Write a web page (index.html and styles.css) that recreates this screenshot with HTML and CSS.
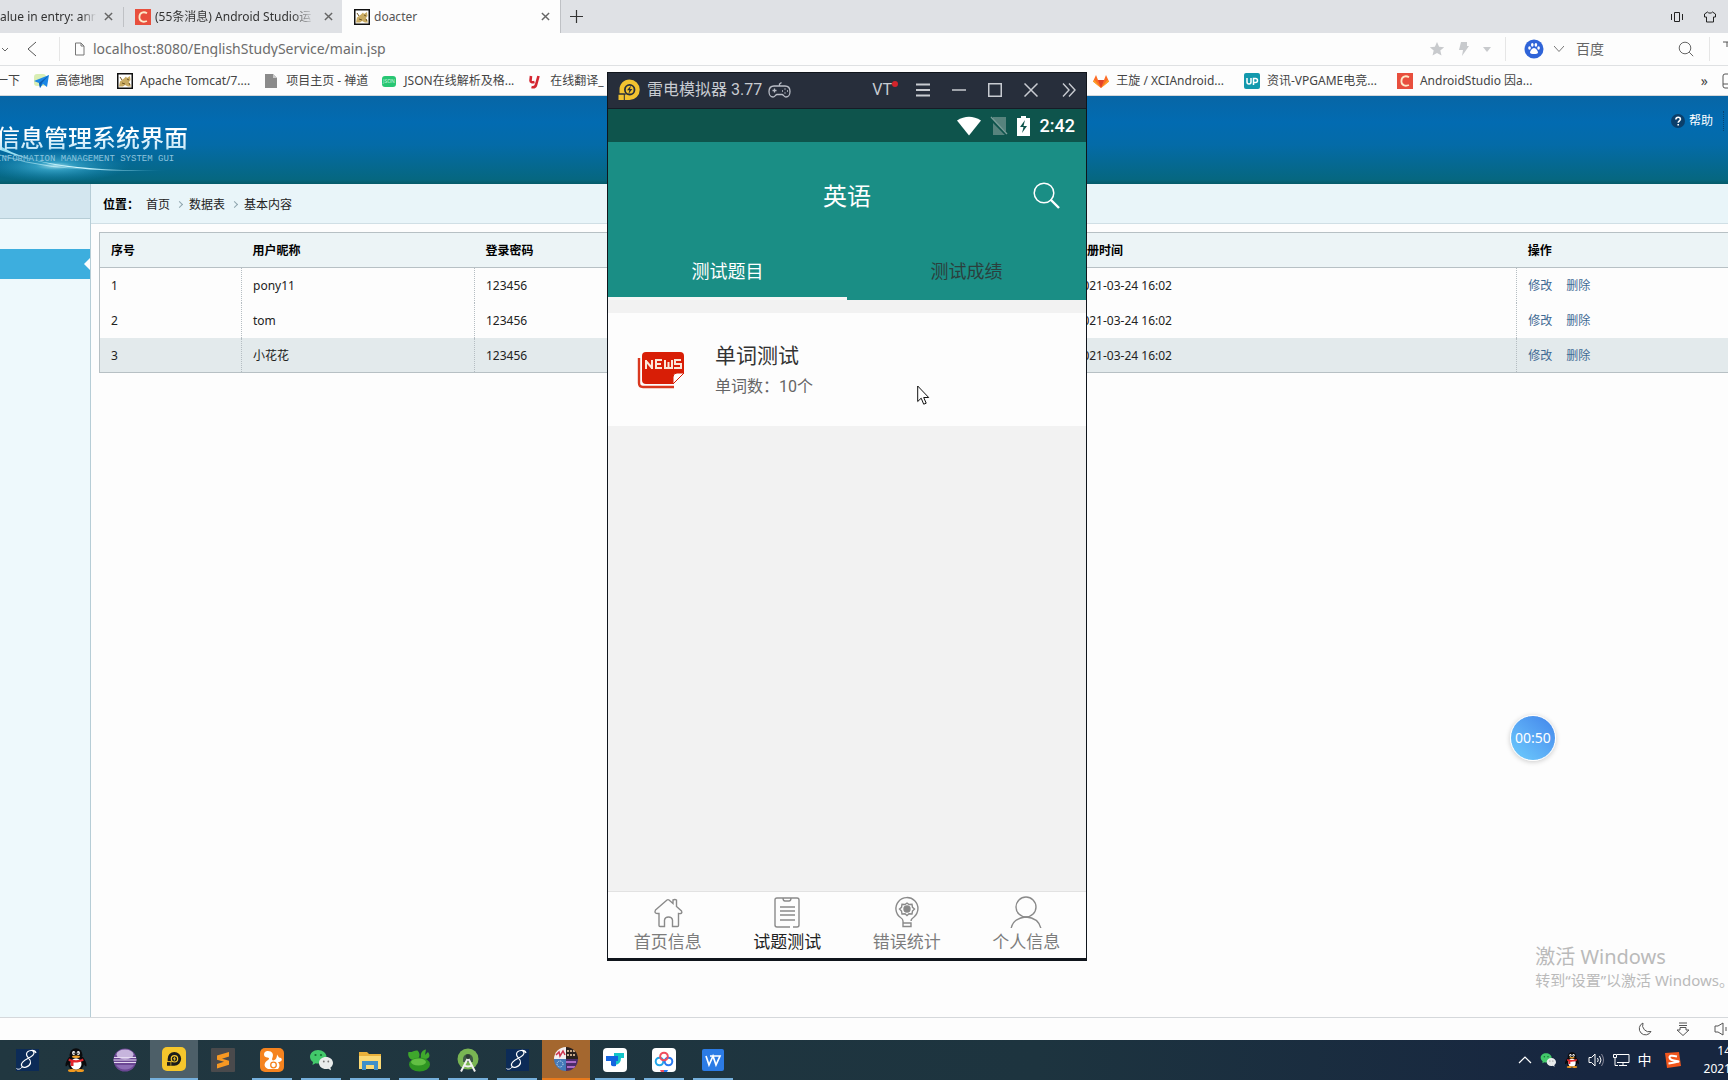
FILE: index.html
```html
<!DOCTYPE html>
<html lang="zh-CN">
<head>
    <meta charset="UTF-8">
    <meta name="viewport" content="width=device-width, initial-scale=1.0">
    <title>doacter</title>
    <link rel="stylesheet" href="styles.css">
</head>
<body>
    <!-- shared icons -->
    <svg class="sprite" aria-hidden="true">
        <symbol id="i-close" viewBox="0 0 10 10"><path d="M1 1l8 8M9 1l-8 8" stroke="currentColor" stroke-width="1.6" fill="none"/></symbol>
        <symbol id="i-csdn" viewBox="0 0 16 16"><rect width="16" height="16" fill="#e84f3d"/><path d="M12 4.2C9 2.4 4.400 3 4.400 8.200c0 4.800 4.600 5.200 7.500 3.800" fill="none" stroke="#fde9c9" stroke-width="1.8"/></symbol>
        <symbol id="i-tomcat" viewBox="0 0 16 16"><rect x=".75" y=".75" width="14.500" height="14.500" fill="#fff" stroke="#111" stroke-width="1.500"/><path d="M2 13.500l1-5 4-3 2-2 1 1.500L13 3l.5 4-1.500 2 2 4.500h-3l-3-1.500-2 1.500z" fill="#c9ab62"/><path d="M3 4l2 3M10 6l2 1M5 10l3 1M12 10l1 2" stroke="#6d5422"/></symbol>
        <symbol id="i-page" viewBox="0 0 12 14"><path d="M1.500 1h5.500L10 4v9H1.500zM7 1v3h3" fill="none" stroke="#777"/></symbol>
        <symbol id="i-search" viewBox="0 0 16 16"><circle cx="7" cy="7" r="5.800" fill="none" stroke="currentColor"/><path d="M11.200 11.200l4 4" stroke="currentColor"/></symbol>
        <symbol id="i-wechat" viewBox="0 0 24 24"><path d="M9 2C4.500 2 1 5 1 8.800c0 2.200 1.200 4.100 3 5.300L3.500 17l3-1.700c5 1.200 11-1.500 11-6.500C17.500 5 13.500 2 9 2z" fill="#42c96a"/><circle cx="6.500" cy="7" r="1.100" fill="#176c33"/><circle cx="12" cy="7" r="1.100" fill="#176c33"/><path d="M17 9c-4 0-7 2.600-7 5.900S13 21 17 21c.8 0 1.500-.1 2.200-.3l2.800 1.500-.6-2.600c1.600-1.100 2.600-2.700 2.600-4.600C24 11.600 21 9 17 9z" fill="#e9ecec"/><circle cx="14.800" cy="13.500" r=".9" fill="#777"/><circle cx="19.300" cy="13.500" r=".9" fill="#777"/></symbol>
        <symbol id="i-qq" viewBox="0 0 24 24"><path d="M5 9c-2 3-4 6-3.500 9 .4 1 2-.5 2.500-1.500h16c.5 1 2.100 2.500 2.500 1.500.5-3-1.500-6-3.500-9z" fill="#0b0b0d"/><ellipse cx="12" cy="15" rx="8" ry="8" fill="#0b0b0d"/><ellipse cx="12" cy="7" rx="6.500" ry="6.800" fill="#0b0b0d"/><ellipse cx="12" cy="16" rx="5.500" ry="5.800" fill="#fff"/><ellipse cx="9.700" cy="5" rx="1.600" ry="2.100" fill="#fff"/><ellipse cx="14.300" cy="5" rx="1.600" ry="2.100" fill="#fff"/><circle cx="10.100" cy="5.200" r=".7"/><circle cx="13.900" cy="5.200" r=".7"/><ellipse cx="12" cy="8.700" rx="4" ry="1.200" fill="#f6a52a"/><path d="M5 10.500c4 2.200 10 2.200 14 0l.6 2.300c-3 1.500-6.600 1.900-10.100 1.700V18H6.800v-4.200l-2.400-1z" fill="#e3262c"/><ellipse cx="8" cy="22.500" rx="4" ry="1.500" fill="#f29a1f"/><ellipse cx="16" cy="22.500" rx="4" ry="1.500" fill="#f29a1f"/></symbol>
        <symbol id="i-eight" viewBox="0 0 24 24"><rect x="1" y="1" width="23" height="22" fill="#0c2b57"/><path d="M21 5c-1-4-9-3-9.500 1-.5 3.500 5 4.500 4 9-1 4-8 6-9 2.500C5.500 13 12 11 15.500 9S20.500 4 17 2.500" fill="none" stroke="#fff" stroke-width="1.200"/><path d="M7 19c-1 2-4 3-5.500 1.500" fill="none" stroke="#fff"/></symbol>
        <symbol id="i-ld" viewBox="0 0 24 24"><path d="M12.500 1.500A10 10 0 0 0 2.500 12v3.500h5a7 7 0 0 0 .5 1H1.500V22h11a10.250 10.250 0 0 0 0-20.500z" fill="currentColor"/><path d="M1 16h8.500M7.300 16v6" stroke="var(--cut)" stroke-width="1"/><circle cx="12.700" cy="11.700" r="4.800" fill="none" stroke="var(--cut)" stroke-width="1.800"/><path d="M14 7.500l-4 4.800h2.400l-1 3.600 4-4.800H13z" fill="var(--cut)"/></symbol>
    </svg>

    <div class="screen">
        <div class="tab-strip">
            <div class="browser-tab">
                <span class="tab-title fade">alue in entry: ann</span>
                <button class="tab-close" aria-label="关闭"><svg><use href="#i-close"/></svg></button>
            </div>
            <div class="browser-tab second">
                <svg class="favicon"><use href="#i-csdn"/></svg>
                <span class="tab-title fade">(55条消息) Android Studio运</span>
                <button class="tab-close" aria-label="关闭"><svg><use href="#i-close"/></svg></button>
            </div>
            <div class="browser-tab current">
                <svg class="favicon"><use href="#i-tomcat"/></svg>
                <span class="tab-title">doacter</span>
                <button class="tab-close" aria-label="关闭"><svg><use href="#i-close"/></svg></button>
            </div>
            <button class="new-tab" aria-label="新标签页"><svg viewBox="0 0 13 13"><path d="M6.500 0v13M0 6.500h13" stroke="#333" stroke-width="1.200"/></svg></button>
            <div class="strip-tools">
                <button aria-label="分屏"><svg width="14" height="14" viewBox="0 0 14 14"><path d="M4.500 2.500h5v9h-5zM1.500 4v6M12.500 4v6" fill="none" stroke="#222"/></svg></button>
                <button aria-label="皮肤"><svg width="14" height="14" viewBox="0 0 14 14"><path d="M4.500 2L1.500 4v3h2v5h7V7h2V4l-3-2c-1 1.500-4 1.500-5 0z" fill="none" stroke="#222"/></svg></button>
            </div>
        </div>

        <div class="address-bar">
            <button class="back-menu" aria-label="历史"><svg width="6" height="5" viewBox="0 0 6 5"><path d="M0 1l3 3 3-3" fill="none" stroke="#666"/></svg></button>
            <button class="back" aria-label="后退"><svg width="10" height="16" viewBox="0 0 10 16"><path d="M9 1L1 8l8 7" fill="none" stroke="#555"/></svg></button>
            <label class="url">
                <svg width="12" height="14"><use href="#i-page"/></svg>
                <input type="text" aria-label="地址" value="localhost:8080/EnglishStudyService/main.jsp">
            </label>
            <div class="url-tools">
                <svg width="16" height="16" viewBox="0 0 16 16"><path d="M8 1l2.100 4.700 5.100.5-3.900 3.400 1.200 5L8 12l-4.500 2.600 1.200-5L.8 6.200l5.100-.5z" fill="#c8cacd"/></svg>
                <svg width="10" height="14" viewBox="0 0 10 14"><path d="M2 0h6v4h2L3 14l1-6H0z" fill="#c8cacd"/></svg>
                <svg width="8" height="5" viewBox="0 0 8 5"><path d="M0 0h8L4 5z" fill="#c8cacd"/></svg>
            </div>
            <label class="engine">
                <svg width="20" height="20" viewBox="0 0 20 20"><circle cx="10" cy="10" r="9.500" fill="#2f64d8"/><path d="M10 9c2 0 4 3 4 4.500s-2 1.500-4 1.500-4 0-4-1.500S8 9 10 9z" fill="#fff"/><ellipse cx="5.500" cy="9" rx="1.300" ry="1.800" fill="#fff"/><ellipse cx="8.300" cy="5.800" rx="1.300" ry="1.900" fill="#fff"/><ellipse cx="11.900" cy="5.800" rx="1.300" ry="1.900" fill="#fff"/><ellipse cx="14.600" cy="9" rx="1.300" ry="1.800" fill="#fff"/></svg>
                <svg width="10" height="6" viewBox="0 0 10 6"><path d="M0 0l5 5.500L10 0" fill="none" stroke="#777"/></svg>
                <input type="text" aria-label="搜索" placeholder="百度">
                <svg class="find" width="16" height="16"><use href="#i-search"/></svg>
            </label>
            <svg class="edge-mark" width="6" height="16" viewBox="0 0 6 16"><path d="M1 1h5M5 1v5" fill="none" stroke="#555"/></svg>
        </div>

        <div class="bookmarks">
            <div class="bookmarks-left">
                <a href="#">一下</a>
                <a href="#"><svg viewBox="0 0 16 16"><rect x="1" y="1" width="12" height="12" rx="3" fill="#d9eeb5"/><path d="M16 2L1 8l5 2 1 5 3-4 4 3z" fill="#1b87e6"/><path d="M16 2L6 10l1 5 2-5z" fill="#0c5fb5"/></svg>高德地图</a>
                <a href="#"><svg><use href="#i-tomcat"/></svg>Apache Tomcat/7....</a>
                <a href="#"><svg viewBox="0 0 16 16"><path d="M2 1h8l4 4v10H2z" fill="#8b8b8b"/><path d="M10 1v4h4z" fill="#c9c9c9"/></svg>项目主页 - 禅道</a>
                <a href="#"><svg viewBox="0 0 16 16"><rect x="1" y="3" width="14" height="11" rx="3" fill="#28c673"/><text x="8" y="10" font-size="5" text-anchor="middle" fill="#c9f5dc">JSON</text></svg>JSON在线解析及格...</a>
                <a href="#"><svg viewBox="0 0 16 16"><path d="M4 3l-.5 4.500q0 2.500 4 1.500M11.500 3L9 12q-1 3-4.500 2" fill="none" stroke="#d42631" stroke-width="2.600"/></svg>在线翻译_</a>
            </div>
            <div class="bookmarks-right">
                <a href="#"><svg viewBox="0 0 16 16"><path d="M8 15L0 8.500 3 2l2 5h6l2-5 3 6.500z" fill="#fc6d26"/><path d="M8 15L5 7h6z" fill="#e24329"/><path d="M8 15L0 8.500 1.500 7z" fill="#fca326"/><path d="M8 15l8-6.500L14.500 7z" fill="#fca326"/></svg>王旋 / XCIAndroid...</a>
                <a href="#"><svg viewBox="0 0 16 16"><rect width="16" height="16" rx="2" fill="#1399ad"/><path d="M3 5v4q0 2 2 2t2-2V5M9.500 12V5.500h2q2 0 2 2t-2 2h-2" fill="none" stroke="#fff" stroke-width="1.500"/></svg>资讯-VPGAME电竞...</a>
                <a href="#"><svg><use href="#i-csdn"/></svg>AndroidStudio 因a...</a>
                <button class="more" aria-label="更多书签">»</button>
                <svg class="edge-mark" width="6" height="16" viewBox="0 0 6 16"><path d="M6 1H3Q1 1 1 3v10q0 2 2 2h3M1 11h5" fill="none" stroke="#555"/></svg>
            </div>
        </div>

        <header class="site-header">
            <svg class="flare" viewBox="0 0 200 62" preserveAspectRatio="none">
                <defs>
                    <radialGradient id="glow"><stop offset="0" stop-color="#c6f6ff"/><stop offset=".25" stop-color="#48b9dc" stop-opacity=".8"/><stop offset="1" stop-color="#1b8fc0" stop-opacity="0"/></radialGradient>
                    <linearGradient id="ray"><stop offset="0" stop-color="#8fdcf0"/><stop offset=".5" stop-color="#d8faff"/><stop offset="1" stop-color="#48b9dc" stop-opacity="0"/></linearGradient>
                </defs>
                <ellipse cx="55" cy="44" rx="75" ry="16" fill="url(#glow)" opacity=".8"/>
                <path d="M0 24Q50 54 170 48Q60 51 0 28z" fill="url(#ray)"/>
                <path d="M0 33Q50 49 110 47" fill="none" stroke="url(#ray)" opacity=".6"/>
            </svg>
            <div class="brand">
                <h1>信息管理系统界面</h1>
                <p>INFORMATION MANAGEMENT SYSTEM GUI</p>
            </div>
            <a class="help" href="#"><svg width="14" height="14" viewBox="0 0 14 14"><circle cx="7" cy="7" r="7" fill="#0b3f6b"/><path d="M4.800 5.500Q5 3.200 7.200 3.200T9.400 5.200C9.400 6.800 7.200 6.800 7.200 8.800M7.200 10v1.600" fill="none" stroke="#fff" stroke-width="1.600"/></svg>帮助</a>
        </header>

        <div class="workspace">
            <aside class="side-menu">
                <div class="side-head"></div>
                <a class="side-item" href="#" aria-label="数据表"></a>
            </aside>
            <main class="content">
                <nav class="crumbs">
                    <b>位置：</b>
                    <a href="#">首页</a><i></i><a href="#">数据表</a><i></i><a href="#">基本内容</a>
                </nav>
                <table class="users">
                    <colgroup><col class="c-no"><col class="c-name"><col class="c-pass"><col class="c-time"><col></colgroup>
                    <thead>
                        <tr><th>序号</th><th>用户昵称</th><th>登录密码</th><th>注册时间</th><th>操作</th></tr>
                    </thead>
                    <tbody>
                        <tr><td>1</td><td>pony11</td><td>123456</td><td>2021-03-24 16:02</td><td><a href="#">修改</a><a href="#">删除</a></td></tr>
                        <tr><td>2</td><td>tom</td><td>123456</td><td>2021-03-24 16:02</td><td><a href="#">修改</a><a href="#">删除</a></td></tr>
                        <tr><td>3</td><td>小花花</td><td>123456</td><td>2021-03-24 16:02</td><td><a href="#">修改</a><a href="#">删除</a></td></tr>
                    </tbody>
                </table>
            </main>
        </div>

        <div class="browser-status">
            <svg width="14" height="14" viewBox="0 0 14 14"><path d="M5 1a6.200 6.200 0 1 0 8 8.500A6.500 6.500 0 0 1 5 1z" fill="none" stroke="#555"/></svg>
            <svg width="14" height="14" viewBox="0 0 14 14"><path d="M3 1h8M3 3.500h8M4 5.500h6V8h3l-6 5.500L1 8h3z" fill="none" stroke="#555"/></svg>
            <svg width="14" height="14" viewBox="0 0 14 14"><path d="M1 4h3l5-3v12l-5-3H1zM12 5v4" fill="none" stroke="#555"/></svg>
        </div>

        <footer class="taskbar">
            <div class="apps">
                <button class="app" aria-label="8"><svg><use href="#i-eight"/></svg></button>
                <button class="app" aria-label="QQ"><svg><use href="#i-qq"/></svg></button>
                <button class="app" aria-label="Eclipse"><svg viewBox="0 0 24 24"><circle cx="12" cy="12" r="11.500" fill="#6b4793"/><ellipse cx="12" cy="6.500" rx="8.500" ry="5" fill="#c7b5dd"/><path d="M1 9.500h22M.5 12h23M1 14.500h22" stroke="#e6dcf2" stroke-width="1.200"/><path d="M3 17c4 6 14 6 18 0z" fill="#8d6db5"/></svg></button>
                <button class="app active" aria-label="雷电模拟器"><svg viewBox="0 0 24 24"><rect width="24" height="24" rx="5" fill="#f5c62c"/><svg x="4" y="4" width="16" height="16" class="ld-dark"><use href="#i-ld"/></svg></svg></button>
                <button class="app" aria-label="Sublime Text"><svg viewBox="0 0 24 24"><rect width="24" height="24" rx="1" fill="#4a4a4c"/><path d="M6 7.500L18 4v4.500L11 10.800l7 2v4L6 20.500V16l7-2.200-7-2z" fill="#f79822"/></svg></button>
                <button class="app open" aria-label="UC"><svg viewBox="0 0 24 24"><rect width="24" height="24" rx="5" fill="#f5831f"/><path d="M8 21c-5-2-4-7 0-9 2-1.500 1-2.500-1-2.500C3 9 3 4 7 3c5-.5 7 3 5.500 6.500-.8 2-.5 2.500.5 3 3-.5 4-3 4-6l2 3 2 .5c2 2 0 4-3 4 2 2 2 5 0 7z" fill="#fff"/><circle cx="13.500" cy="17" r="2.800" fill="none" stroke="#f5831f" stroke-width="1.300"/></svg></button>
                <button class="app open" aria-label="微信"><svg><use href="#i-wechat"/></svg></button>
                <button class="app open" aria-label="资源管理器"><svg viewBox="0 0 24 24"><path d="M1 4h8l2 2h12v15H1z" fill="#e9b13b"/><path d="M1 8h22v13H1z" fill="#fbd975"/><path d="M4 13h16v9h-4v-5H8v5H4z" fill="#3f8fc9"/></svg></button>
                <button class="app open" aria-label="螃蟹"><svg viewBox="0 0 24 24"><path d="M10 11.500C4 14 0 9 1.500 4c4 .5 6-2 9-1.500C13 5 13.500 9 10 11.500zM14 10C13 6 15 2 19 1.500l-1 5.500 3-3c4 5-1 9-7 6z" fill="#3fa82c"/><ellipse cx="12.500" cy="16.500" rx="10.500" ry="7" fill="#2f9522"/><ellipse cx="11.500" cy="14" rx="7.500" ry="3.500" fill="#62c043"/></svg></button>
                <button class="app open" aria-label="Android Studio"><svg viewBox="0 0 24 24"><circle cx="12" cy="11" r="10.500" fill="#79b553"/><path d="M7 11a5 5 0 0 1 10 0v3H7z" fill="#3e5a45"/><path d="M11.500 11L5 23.500M12.500 11L19 23.500M7.500 17c3 2 6 2 9 0" stroke="#f1f1f1" stroke-width="2" fill="none"/><circle cx="12" cy="8.500" r="2.200" fill="#2d3a35"/></svg></button>
                <button class="app open" aria-label="8"><svg><use href="#i-eight"/></svg></button>
                <button class="app alert" aria-label="消息"><svg viewBox="0 0 24 24"><clipPath id="round"><circle cx="12" cy="12" r="12"/></clipPath><g clip-path="url(#round)"><path fill="#f4eef0" d="M0 0h12v12H0z"/><path fill="#2a211f" d="M12 0h12v12H12z"/><path fill="#4479b8" d="M0 12h12v12H0z"/><path fill="#4b2c69" d="M12 12h12v12H12z"/><path d="M2 8l3-3 1 4 3-5 2 4" stroke="#cc3550" fill="none" stroke-width="1.500"/><path d="M13 4h9M13 8h9" stroke="#c6a889" stroke-dasharray="2 1" stroke-width="2"/><path d="M12 15h10M13 20h8" stroke="#ac6bc6" stroke-width="2"/><circle cx="6" cy="17" r="3" fill="none" stroke="#d6e8f5" stroke-dasharray="1 1"/></g></svg></button>
                <button class="app open" aria-label="TIM"><svg viewBox="0 0 24 24"><rect width="24" height="24" rx="4" fill="#fff"/><path d="M11 5h10v5h-3q0 6-6 7V9h-1z" fill="#13c5c9"/><path d="M3 8h12v5h-2v5q-4 1-5-1v-4H3z" fill="#1565e0"/></svg></button>
                <button class="app open" aria-label="百度网盘"><svg viewBox="0 0 24 24"><rect width="24" height="24" rx="4" fill="#fff"/><circle cx="7.500" cy="13.500" r="3.800" fill="none" stroke="#22a7ea" stroke-width="2"/><circle cx="16.500" cy="13.500" r="3.800" fill="none" stroke="#2b7af0" stroke-width="2"/><circle cx="12" cy="8.500" r="3.800" fill="none" stroke="#ef4d5e" stroke-width="2"/><path d="M8 22h4v2H9z" fill="#ef4d5e"/><path d="M12 22h4l-1 2h-3z" fill="#2b7af0"/></svg></button>
                <button class="app open" aria-label="WPS"><svg viewBox="0 0 24 24"><rect x="1" y="1" width="22" height="22" rx="2" fill="#2c7be5"/><path d="M5 8l3 9 4-9 3 9 4-9H9" fill="none" stroke="#fff" stroke-width="1.700"/></svg></button>
            </div>
            <div class="tray">
                <svg width="14" height="8" viewBox="0 0 14 8"><path d="M1 7l6-6 6 6" fill="none" stroke="#fff" stroke-width="1.200"/></svg>
                <svg width="16" height="16"><use href="#i-wechat"/></svg>
                <svg width="16" height="16"><use href="#i-qq"/></svg>
                <svg width="16" height="16" viewBox="0 0 16 16"><path d="M1 5.500h2.500L7 2v12l-3.500-3.500H1zM9.500 6q1.500 2 0 4M11.500 4q3 4 0 8" fill="none" stroke="#fff"/><path d="M13.500 2q4 6 0 12" fill="none" stroke="#889"/></svg>
                <svg width="18" height="16" viewBox="0 0 18 16"><path d="M5 2.500h12v8H5M11 10.500v3M7 13.500h8M1.500 2.500h3v3h-3zM3 5.500v8h3" fill="none" stroke="#fff"/></svg>
                <span class="ime">中</span>
                <svg class="sogou" width="18" height="18" viewBox="0 0 18 18"><path d="M1 2l14-1 2 14-14 2z" fill="#f0561d"/><path d="M13 5.500Q5 3.500 5.500 6.500T12.500 10t-8 2.500" fill="none" stroke="#fff" stroke-width="2"/></svg>
                <time class="clock"><span>14</span><span>2021</span></time>
            </div>
        </footer>

        <section class="emulator">
            <div class="emu-title">
                <svg class="ld-gold" width="24" height="24"><use href="#i-ld"/></svg>
                <span>雷电模拟器 3.77</span>
                <svg width="23" height="18" viewBox="0 0 23 18"><path d="M6 5h11c3 0 5 2 5 5.500S20 16 18 16s-2.500-2.500-4-2.500H9C7.500 13.500 7 16 5 16s-4-2-4-5.500S3 5 6 5zM11.500 5V3l2-1.500M4.500 9.500h4M6.500 7.500v4" fill="none" stroke="#b9bdc6" stroke-width="1.300"/><path d="M14 10h1M16.500 8h1M16.500 12h1M19 10h1" stroke="#b9bdc6" stroke-width="1.600"/></svg>
                <div class="emu-controls">
                    <button class="vt">VT<i></i></button>
                    <button aria-label="菜单"><svg viewBox="0 0 14 14"><path d="M0 1.500h14M0 7h14M0 12.500h14" stroke="#c8cbd1" stroke-width="1.800"/></svg></button>
                    <button aria-label="最小化"><svg viewBox="0 0 14 14"><path d="M0 7h14" stroke="#c8cbd1" stroke-width="1.500"/></svg></button>
                    <button aria-label="最大化"><svg viewBox="0 0 14 14"><path d="M.75.75h12.500v12.500H.75z" fill="none" stroke="#c8cbd1" stroke-width="1.500"/></svg></button>
                    <button aria-label="关闭"><svg viewBox="0 0 14 14"><path d="M.5.5l13 13M13.500.5l-13 13" stroke="#c8cbd1" stroke-width="1.500"/></svg></button>
                    <button class="expand" aria-label="展开"><svg viewBox="0 0 14 14"><path d="M1 .5L7 7l-6 6.500M7 .5L13 7l-6 6.500" fill="none" stroke="#c8cbd1" stroke-width="1.400"/></svg></button>
                </div>
            </div>
            <div class="phone-status">
                <svg width="24" height="20" viewBox="0 0 24 20"><path d="M0 4.500Q12-3 24 4.500L12 19.500z" fill="#fff"/></svg>
                <svg width="18" height="20" viewBox="0 0 18 20"><path d="M3 1h13v18H3z" fill="#57837d"/><path d="M0 2l17 17" stroke="#0e544c" stroke-width="3"/><path d="M1 1l16 17" stroke="#7d9f9a" stroke-width="1.300"/></svg>
                <svg width="14" height="20" viewBox="0 0 14 20"><path d="M4 0h5v2h4v18H0V2h4z" fill="#fff"/><path d="M8 4l-5 7h3.500L5 17l5-7H6.500z" fill="#0e544c"/></svg>
                <span>2:42</span>
            </div>
            <div class="app-bar">
                <h2>英语</h2>
                <button class="app-search" aria-label="搜索"><svg width="28" height="28" viewBox="0 0 28 28"><circle cx="11" cy="11" r="9.800" fill="none" stroke="#fff" stroke-width="1.500"/><path d="M17.500 17.500l8.500 8.500" stroke="#fff" stroke-width="2.400"/></svg></button>
            </div>
            <div class="app-tabs">
                <button class="selected">测试题目</button>
                <button>测试成绩</button>
            </div>
            <div class="app-body">
                <article class="quiz">
                    <svg width="48" height="38" viewBox="0 0 48 38"><path d="M2 7v25q0 4 4 4h31" fill="none" stroke="#d9381f" stroke-width="2.400"/><path d="M9 1h34q4 0 4 4v17L36 33H9q-4 0-4-4V5q0-4 4-4z" fill="#d81e06"/><path d="M36 33v-7q0-4 4-4h7z" fill="#fff" stroke="#d81e06"/><g fill="none" stroke="#fbe6d9" stroke-width="2"><path d="M9 18V9M9 10l6 7M15 18V9M25 9h-6v8h6M19 13h5M28 9v8h7V9M31.500 11v6M44 9h-6v4h6v4h-7"/></g></svg>
                    <div>
                        <h3>单词测试</h3>
                        <p>单词数：10个</p>
                    </div>
                </article>
            </div>
            <nav class="app-nav">
                <a href="#"><svg viewBox="0 0 32 32"><path d="M3.500 14L15 4q1-.8 2 0l4 3.500V4q2-1 3.500 0v6.500l5 4.500q1.500 3-3 2.500v12q0 1-1 1h-5V24q-.5-3-4-3t-4 3v6.500H8q-1 0-1-1v-12q-5.500.5-3.500-3.500z"/></svg>首页信息</a>
                <a class="selected" href="#"><svg viewBox="0 0 32 32"><path d="M19 31H6q-2 0-2-2V4q0-2 2-2h20q2 0 2 2v25q0 2-2 2h-4M12 2q0 3 2 3h4q2 0 2-3M9 11h15M9 15h15M9 19h15M9 24h15"/></svg>试题测试</a>
                <a href="#"><svg viewBox="0 0 32 32"><path d="M12 25q0-2-2.500-3.500a11 11 0 1 1 13.500-.5Q20 23 20 25M12 27h8v3.500h-8zM12 25v2M16 7l2 1.500 3-.2.500 3 2 1.700-2 2-.5 3-3-.3-2 1.800-2-1.800-3 .3-.5-3-2-2 2-1.700.5-3 3 .2z"/><circle cx="16" cy="13" r="3" fill="#888"/></svg>错误统计</a>
                <a href="#"><svg viewBox="0 0 32 32"><circle cx="16" cy="11" r="10"/><path d="M1 33q2-11 15-12 13 1 15 12"/></svg>个人信息</a>
            </nav>
            <svg class="cursor" width="13" height="20" viewBox="0 0 13 20"><path d="M.7 1v15.500l3.500-3.300 2.500 6 2.500-1-2.500-5.700h5z" fill="#fff" stroke="#111"/></svg>
        </section>

        <div class="timer">00:50</div>
        <div class="watermark">
            <strong>激活 Windows</strong>
            <span>转到“设置”以激活 Windows。</span>
        </div>
    </div>
</body>
</html>
```

FILE: styles.css
```css
* {
    margin: 0;
    padding: 0;
    box-sizing: border-box;
}

body {
    font-family: "Noto Sans", "Noto Sans CJK SC", sans-serif;
    font-size: 12px;
    line-height: 16px;
    color: #222;
}

a {
    color: inherit;
    text-decoration: none;
}

button, input {
    font: inherit;
    color: inherit;
    background: none;
    border: none;
    outline: none;
}

svg {
    display: block;
    flex-shrink: 0;
}

.sprite {
    position: absolute;
    width: 0;
    height: 0;
}

.screen {
    position: relative;
    display: flex;
    flex-direction: column;
    height: 100vh;
    overflow: hidden;
    background: #fdfdfd;
}

/* browser tabs */
.tab-strip {
    display: flex;
    align-items: center;
    height: 33px;
    background: #dfe1e5;
    color: #333;
}

.browser-tab {
    display: flex;
    align-items: center;
    gap: 4px;
    width: 124px;
    height: 20px;
    padding-right: 10px;
    border-right: 1px solid #bfc1c5;
}

.browser-tab.second {
    width: 218px;
    padding-left: 11px;
    padding-right: 9px;
    border: none;
}

.browser-tab.current {
    width: 219px;
    height: 100%;
    padding-left: 12px;
    background: #fdfdfd;
    color: #555;
}

.favicon {
    width: 16px;
    height: 16px;
}

.tab-title {
    flex: 1;
    overflow: hidden;
    white-space: nowrap;
}

.fade {
    -webkit-mask-image: linear-gradient(90deg, #000 85%, transparent);
    mask-image: linear-gradient(90deg, #000 85%, transparent);
}

.tab-close {
    color: #666;
    padding-left: 4px;
}

.tab-close svg {
    width: 9px;
    height: 9px;
}

.new-tab {
    margin-left: 9px;
}

.new-tab svg {
    width: 13px;
    height: 13px;
}

.strip-tools {
    display: flex;
    gap: 19px;
    margin-left: auto;
    padding-right: 11px;
}

/* address row */
.address-bar {
    display: flex;
    align-items: center;
    height: 33px;
    border-bottom: 1px solid #dfe1e3;
}

.back-menu {
    margin-left: 2px;
}

.back {
    padding: 0 22px 0 19px;
}

.url {
    display: flex;
    flex: 1;
    align-items: center;
    gap: 7px;
    height: 24px;
    padding-left: 14px;
    border-left: 1px solid #e6e6e6;
}

.url input {
    flex: 1;
    font-size: 14px;
    color: #6c6c6c;
}

.url-tools {
    display: flex;
    align-items: center;
    gap: 14px;
    padding-right: 14px;
}

.engine {
    display: flex;
    align-items: center;
    gap: 10px;
    width: 205px;
    height: 24px;
    padding: 0 15px 0 18px;
    border-left: 1px solid #e6e6e6;
    border-right: 1px solid #e6e6e6;
    font-size: 14px;
    color: #666;
}

.engine input {
    flex: 1;
    min-width: 0;
    padding-left: 2px;
}

.engine input::placeholder {
    color: #666;
}

.edge-mark {
    margin-left: 12px;
}

/* bookmarks */
.bookmarks {
    display: flex;
    height: 30px;
    border-bottom: 1px solid #d5d8db;
    color: #444;
    white-space: nowrap;
}

.bookmarks a {
    display: flex;
    align-items: center;
    gap: 7px;
}

.bookmarks a svg {
    width: 16px;
    height: 16px;
}

.bookmarks-left {
    display: flex;
    gap: 13px;
    width: 63.5%;
    margin-left: -4px;
}

.bookmarks-right {
    display: flex;
    flex: 1;
    align-items: center;
    gap: 20px;
}

.more {
    margin-left: auto;
    font-size: 14px;
}

.bookmarks-right .edge-mark {
    margin-left: -6px;
}

/* admin site header */
.site-header {
    position: relative;
    display: flex;
    justify-content: space-between;
    height: 88px;
    background: linear-gradient(#0766a6, #026bb1 30%, #046ba8 55%, #066780 95%, #055a68);
    color: #fff;
}

.flare {
    position: absolute;
    left: 0;
    bottom: 0;
    width: 200px;
    height: 62px;
}

.brand {
    position: relative;
    margin-left: -4px;
    padding-top: 26px;
    white-space: nowrap;
}

.brand h1 {
    font-size: 24px;
    line-height: 32px;
    font-weight: 500;
    background: linear-gradient(#fff 40%, #a8dcf5);
    -webkit-background-clip: text;
    background-clip: text;
    color: transparent;
}

.brand p {
    font-family: "Liberation Mono", monospace;
    font-size: 9px;
    line-height: 10px;
    color: #8cc4de;
}

.help {
    display: flex;
    align-items: center;
    gap: 4px;
    height: 20px;
    margin-top: 15px;
    padding-right: 10px;
    margin-right: 4px;
    border-right: 1px dotted #0a4675;
}

/* admin workspace */
.workspace {
    display: flex;
    flex: 1;
    min-height: 0;
}

.side-menu {
    width: 91px;
    background: #eef9fc;
    border-right: 1px solid #b6cdd6;
}

.side-head {
    height: 35px;
    background: #d3e6ef;
    border-bottom: 1px solid #b6cdd6;
}

.side-item {
    position: relative;
    display: block;
    height: 30px;
    margin-top: 30px;
    background: #3daede;
}

/* notch on the open menu entry */
.side-item::after {
    content: "";
    position: absolute;
    right: 0;
    top: 9px;
    border: 6px solid transparent;
    border-left: none;
    border-right-color: #fdfdfd;
}

.content {
    flex: 1;
}

.crumbs {
    display: flex;
    align-items: center;
    gap: 7px;
    height: 40px;
    padding: 2px 0 0 12px;
    background: #e9f5f9;
    border-bottom: 1px solid #d0dfe5;
}

.crumbs b {
    color: #000;
}

.crumbs i {
    width: 5px;
    height: 5px;
    border-top: 1px solid #8fa5ae;
    border-right: 1px solid #8fa5ae;
    transform: rotate(45deg);
}

.users {
    width: calc(100% - 8px);
    margin: 8px 0 0 8px;
    table-layout: fixed;
    border-collapse: collapse;
    border: 1px solid #b7c0c4;
    border-right: none;
}

.c-no { width: 142px; }
.c-name { width: 233px; }
.c-pass { width: 36.2%; }
.c-time { width: 27.8%; }

.users th {
    height: 35px;
    padding: 2px 0 0 11px;
    text-align: left;
    color: #000;
    background: #ecf4f6;
    border-bottom: 1px solid #b7c0c4;
}

.users td {
    height: 35px;
    padding: 2px 0 0 11px;
    border-right: 1px dotted #b5bdc2;
}

.users td:last-child {
    border-right: none;
    color: #3f6a94;
}

.users tbody tr:last-child {
    background: #e3eaec;
}

.users td a {
    margin-right: 14px;
}

.browser-status {
    display: flex;
    align-items: center;
    justify-content: flex-end;
    gap: 24px;
    height: 23px;
    border-top: 1px solid #d5d8db;
}

/* windows taskbar */
.taskbar {
    display: flex;
    justify-content: space-between;
    height: 40px;
    background: linear-gradient(90deg, #213740, #1d343f 60%, #172640 92%);
}

.apps {
    display: flex;
    gap: 1px;
    padding-left: 3px;
}

.app {
    display: flex;
    align-items: center;
    justify-content: center;
    width: 48px;
}

.app > svg {
    width: 24px;
    height: 24px;
}

.app.open {
    background: linear-gradient(#76b0dc, #76b0dc) center bottom / 40px 2px no-repeat;
}

.app.active {
    background: #4d5f68;
    border-bottom: 2px solid #76b0dc;
}

.app.alert {
    background: #a4672f;
    border-bottom: 2px solid #e87a1c;
}

.ld-dark {
    color: #1b1b1b;
    --cut: #f5c62c;
}

.ld-gold {
    color: #f2c230;
    --cut: #272e3b;
}

.tray {
    display: flex;
    align-items: center;
    gap: 8px;
    margin-right: -3px;
    color: #fff;
}

.ime {
    font-size: 14px;
}

.sogou {
    margin-left: 4px;
}

.clock {
    display: flex;
    flex-direction: column;
    align-items: flex-end;
    margin-left: 14px;
    line-height: 18px;
}

/* emulator window */
.emulator {
    position: absolute;
    left: 607px;
    top: 72px;
    display: flex;
    flex-direction: column;
    width: 480px;
    height: 889px;
    border: 1px solid #10151c;
    border-bottom-width: 3px;
    background: #f2f2f2;
}

.emu-title {
    display: flex;
    align-items: center;
    gap: 6px;
    height: 36px;
    padding: 0 10px 2px 9px;
    background: #272e3b;
    border-bottom: 1px solid #161c26;
    font-family: Roboto, "Noto Sans CJK SC", sans-serif;
    font-size: 16px;
    line-height: 20px;
    color: #c8cbd1;
}

.emu-controls {
    display: flex;
    align-items: center;
    gap: 22px;
    margin-left: auto;
}

.emu-controls svg {
    width: 14px;
    height: 14px;
}

.vt {
    position: relative;
    margin-right: 2px;
}

.vt i {
    position: absolute;
    right: -6px;
    top: 1px;
    width: 6px;
    height: 6px;
    border-radius: 50%;
    background: #d3242b;
}

.expand {
    margin-left: 2px;
}

.phone-status {
    display: flex;
    align-items: center;
    justify-content: flex-end;
    gap: 9px;
    height: 33px;
    padding-right: 11px;
    background: #0e544c;
    font-family: Roboto, sans-serif;
    font-size: 18px;
    font-weight: 500;
    color: #fff;
}

.app-bar {
    position: relative;
    height: 106px;
    background: #1a8e85;
    color: #fff;
    text-align: center;
}

.app-bar h2 {
    font-size: 24px;
    font-weight: 400;
    line-height: 108px;
}

.app-search {
    position: absolute;
    right: 25px;
    top: 40px;
}

.app-tabs {
    display: flex;
    height: 52px;
    background: #1a8e85;
}

.app-tabs button {
    flex: 1;
    padding-bottom: 3px;
    border-bottom: 3px solid #1a8e85;
    font-size: 18px;
    line-height: 24px;
    color: #2b3f3d;
}

.app-tabs .selected {
    color: #fff;
    border-color: #f6f6f6;
}

.app-body {
    flex: 1;
    padding-top: 13px;
}

.quiz {
    display: flex;
    align-items: center;
    gap: 30px;
    height: 113px;
    padding-left: 29px;
    background: #fdfdfd;
}

.quiz h3 {
    padding-top: 2px;
    font-size: 21px;
    font-weight: 400;
    line-height: 32px;
    color: #333;
}

.quiz p {
    font-family: Roboto, "Noto Sans CJK SC", sans-serif;
    font-size: 16px;
    line-height: 32px;
    color: #666;
}

.app-nav {
    display: flex;
    height: 67px;
    padding-top: 4px;
    background: #fdfdfd;
    border-top: 1px solid #e2e2e2;
}

.app-nav a {
    display: flex;
    flex: 1;
    flex-direction: column;
    align-items: center;
    font-size: 17px;
    line-height: 28px;
    color: #7c7c7c;
}

.app-nav a svg {
    width: 32px;
    height: 32px;
    fill: none;
    stroke: #8a8a8a;
    stroke-width: 1.4;
}

.app-nav .selected {
    color: #222;
}

.cursor {
    position: absolute;
    left: 309px;
    top: 312px;
}

/* floating recorder timer */
.timer {
    position: absolute;
    right: 172px;
    bottom: 319px;
    width: 46px;
    height: 46px;
    border: 1px solid #fff;
    border-radius: 50%;
    background: linear-gradient(40deg, #69c6fb 10%, #5aa9f5 50%, #4285ea);
    box-shadow: 0 1px 5px #c9c9c9;
    font-size: 14px;
    line-height: 44px;
    text-align: center;
    color: #fff;
}

.watermark {
    position: absolute;
    right: -6px;
    bottom: 90px;
    display: flex;
    flex-direction: column;
    color: #bababa;
    white-space: nowrap;
}

.watermark strong {
    font-size: 20px;
    font-weight: 400;
    line-height: 26px;
}

.watermark span {
    font-size: 15px;
    line-height: 20px;
}
```
